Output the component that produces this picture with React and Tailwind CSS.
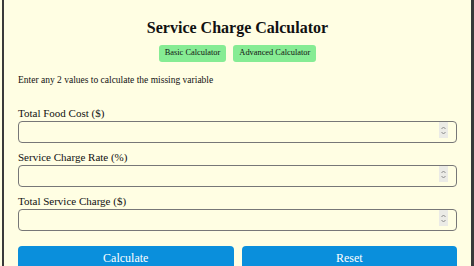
import { useState } from "react";

function Spinner() {
  return (
    <div className="pointer-events-none absolute right-[9px] top-[3px] flex h-[16px] w-[9px] items-center justify-center bg-[#ebebe6]">
      <svg width="7" height="11" viewBox="0 0 7 11" fill="none" stroke="#8a8a8a" strokeWidth="1">
        <path d="M1.5 4 L3.5 2 L5.5 4" />
        <path d="M1.5 7 L3.5 9 L5.5 7" />
      </svg>
    </div>
  );
}

function Field({ label, value, onChange }) {
  return (
    <div className="flex flex-col">
      <label className="text-[11px] leading-[12px] text-[#111]">{label}</label>
      <div className="relative">
        <input
          type="number"
          value={value}
          onChange={(e) => onChange(e.target.value)}
          className="h-[22px] w-full appearance-none rounded-[4px] border-[1.5px] border-[#777] bg-[#fffee3] px-2 text-[11px] outline-none [&::-webkit-inner-spin-button]:appearance-none"
        />
        <Spinner />
      </div>
    </div>
  );
}

export default function App() {
  const [cost, setCost] = useState("");
  const [rate, setRate] = useState("");
  const [charge, setCharge] = useState("");

  const reset = () => {
    setCost("");
    setRate("");
    setCharge("");
  };

  return (
    <div className="h-[266px] w-[474px] overflow-hidden bg-[#fffee3] pl-[2px]" style={{ fontFamily: '"Liberation Serif", "Times New Roman", serif' }}>
      <div className="h-full border-l-[2px] border-r-[3px] border-[#3a3a3a] px-[14px] pt-[18px]">
        <h1 className="text-center text-[16px] font-bold leading-[20px] text-[#111]">
          Service Charge Calculator
        </h1>
        <div className="mt-[7px] flex justify-center gap-[7px]">
          <button className="h-[17px] rounded-[3px] bg-[#86ec94] px-[6px] text-[8.4px] text-[#111]">Basic Calculator</button>
          <button className="h-[17px] rounded-[3px] bg-[#86ec94] px-[6px] text-[8.4px] text-[#111]">Advanced Calculator</button>
        </div>
        <p className="mt-[12px] text-[9.5px] leading-[13px] text-[#111]">
          Enter any 2 values to calculate the missing variable
        </p>
        <div className="mt-[20px] flex flex-col gap-[8px]">
          <Field label="Total Food Cost ($)" value={cost} onChange={setCost} />
          <Field label="Service Charge Rate (%)" value={rate} onChange={setRate} />
          <Field label="Total Service Charge ($)" value={charge} onChange={setCharge} />
        </div>
        <div className="mt-[15px] grid grid-cols-2 gap-[8px]">
          <button className="h-[26px] rounded-[4px] bg-[#0a8fdc] pb-[2px] text-[12px] text-white">Calculate</button>
          <button className="h-[26px] rounded-[4px] bg-[#0a8fdc] pb-[2px] text-[12px] text-white" onClick={reset}>Reset</button>
        </div>
      </div>
    </div>
  );
}
